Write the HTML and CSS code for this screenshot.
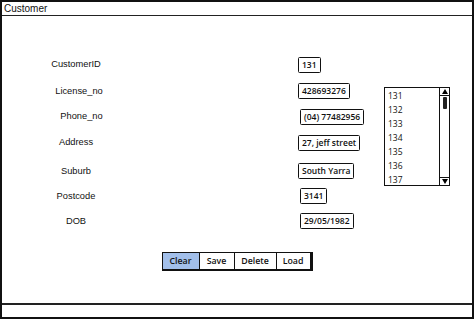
FILE: index.html
```html
<!DOCTYPE html>
<html>
<head>
<meta charset="utf-8">
<link rel="stylesheet" href="styles.css">
</head>
<body>
<div class="window">
  <div class="titlebar">Customer</div>
  <div class="content">
    <div class="form">
      <div class="label r1">CustomerID</div>
      <div class="field r1"><span class="box">131</span></div>
      <div class="label r2 shift-r">License_no</div>
      <div class="field r2"><span class="box">428693276</span></div>
      <div class="label r3 shift-rr">Phone_no</div>
      <div class="field r3"><span class="box nudge">(04) 77482956</span></div>
      <div class="label r4">Address</div>
      <div class="field r4"><span class="box">27, jeff street</span></div>
      <div class="label r5">Suburb</div>
      <div class="field r5"><span class="box">South Yarra</span></div>
      <div class="label r6">Postcode</div>
      <div class="field r6"><span class="box nudge">3141</span></div>
      <div class="label r7">DOB</div>
      <div class="field r7"><span class="box nudge">29/05/1982</span></div>
      <div class="listbox">
        <ul class="items">
          <li>131</li><li>132</li><li>133</li><li>134</li><li>135</li><li>136</li><li>137</li>
        </ul>
        <div class="scrollbar">
          <svg class="arrow" width="8" height="7" viewBox="0 0 8 7"><polygon points="4,1 7,6 1,6" fill="#000"/></svg>
          <div class="track"><div class="thumb"></div></div>
          <svg class="arrow" width="8" height="7" viewBox="0 0 8 7"><polygon points="1,1 7,1 4,6" fill="#000"/></svg>
        </div>
      </div>
    </div>
    <div class="buttons">
      <div class="btn selected">Clear</div>
      <div class="btn">Save</div>
      <div class="btn">Delete</div>
      <div class="btn">Load</div>
    </div>
  </div>
  <div class="statusbar"></div>
</div>
</body>
</html>
```

FILE: styles.css
```css
html, body {
  margin: 0;
  padding: 0;
  background: #fff;
}
.window {
  box-sizing: border-box;
  width: 474px;
  height: 319px;
  border: 2px solid #111;
  display: flex;
  flex-direction: column;
  font-family: "Liberation Sans", Arial, sans-serif;
  color: #111;
}
.titlebar {
  height: 13px;
  border-bottom: 1.5px solid #222;
  font-size: 10px;
  line-height: 13px;
  padding-left: 2px;
}
.content {
  flex: 1;
  padding-top: 36px;
}
.form {
  display: grid;
  grid-template-columns: 38px 72px 186px 86px 66px;
  grid-template-rows: repeat(7, 26px);
}
.label {
  grid-column: 2;
  font-size: 9.3px;
  display: flex;
  align-items: center;
  justify-content: center;
  margin-top: -3px;
}
.shift-r { padding-left: 6px; }
.shift-rr { padding-left: 11px; }
.r1 { grid-row: 1; }
.r2 { grid-row: 2; margin-top: -1px; }
.r3 { grid-row: 3; }
.r4 { grid-row: 4; }
.r5 { grid-row: 5; margin-top: 4px; }
.r6 { grid-row: 6; margin-top: 2px; }
.r7 { grid-row: 7; margin-top: 0; }
.field {
  grid-column: 4;
  display: flex;
  align-items: center;
}
.box {
  box-sizing: border-box;
  height: 16px;
  border: 1.5px solid #111;
  border-radius: 1.5px;
  padding: 0 3px;
  font-family: "Open Sans", sans-serif;
  font-size: 8.5px;
  font-weight: 600;
  line-height: 13px;
  white-space: nowrap;
}
.nudge { margin-left: 2px; }
.listbox {
  grid-column: 5;
  grid-row: 2 / span 5;
  margin-top: 9px;
  width: 66px;
  height: 99px;
  box-sizing: border-box;
  border: 1.5px solid #111;
  display: flex;
}
.items {
  flex: 1;
  list-style: none;
  margin: 0;
  padding: 1px 0 0 3px;
  font-family: "Open Sans", sans-serif;
  font-size: 8.5px;
}
.items li {
  height: 14px;
  line-height: 14px;
}
.scrollbar {
  width: 9px;
  border-left: 1px solid #111;
  display: flex;
  flex-direction: column;
  align-items: center;
}
.arrow {
  display: block;
  flex: none;
}
.track {
  flex: 1;
  width: 100%;
  border-top: 1px solid #111;
  border-bottom: 1px solid #111;
}
.thumb {
  width: 4px;
  height: 12px;
  background: #222;
  border-radius: 1px;
  margin: 1px auto 0;
}
.buttons {
  display: flex;
  justify-content: center;
  margin-top: 18px;
}
.btn {
  height: 16px;
  line-height: 16px;
  font-family: "Open Sans", sans-serif;
  font-size: 8.8px;
  font-weight: 600;
  border-top: 1.5px solid #111;
  border-bottom: 2px solid #111;
  border-left: 1px solid #111;
  text-align: center;
  background: #fff;
}
.btn:nth-child(1) { width: 36px; border-left-width: 1.5px; }
.btn:nth-child(2) { width: 34px; }
.btn:nth-child(3) { width: 41px; }
.btn:nth-child(4) { width: 33px; border-right: 3px solid #111; }
.btn.selected {
  background: #a2bfea;
}
.statusbar {
  height: 12px;
  border-top: 2px solid #222;
}
```
